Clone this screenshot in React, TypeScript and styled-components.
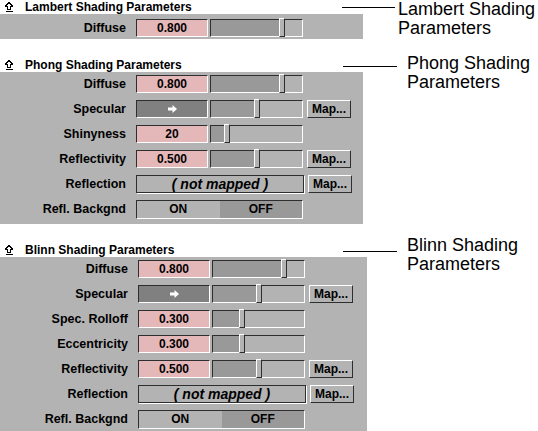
import React from "react";
import styled, { createGlobalStyle } from "styled-components";

const PANEL = "#b3b3b3";
const SHADE = "#999999";
const EDGE = "#2e2e2e";

type Param =
  | { kind: "value"; label: string; value: string; pos: number; map?: boolean }
  | { kind: "color"; label: string; pos: number; map?: boolean }
  | { kind: "texture"; label: string }
  | { kind: "toggle"; label: string; on: boolean };

type Section = {
  title: string;
  width: number;
  indent: number;
  pad: [number, number];
  note: { pull: number; top: number; lead: number; leader: number; gap: number };
  params: Param[];
};

const sections: Section[] = [
  {
    title: "Lambert Shading Parameters",
    width: 363,
    indent: 126,
    pad: [5, 2],
    note: { pull: 21, top: 0, lead: 7, leader: 53, gap: 3 },
    params: [{ kind: "value", label: "Diffuse", value: "0.800", pos: 0.8 }],
  },
  {
    title: "Phong Shading Parameters",
    width: 363,
    indent: 126,
    pad: [3, 6],
    note: { pull: 20, top: -4, lead: 8, leader: 54, gap: 10 },
    params: [
      { kind: "value", label: "Diffuse", value: "0.800", pos: 0.8 },
      { kind: "color", label: "Specular", pos: 0.5, map: true },
      { kind: "value", label: "Shinyness", value: "20", pos: 20 / 128 },
      { kind: "value", label: "Reflectivity", value: "0.500", pos: 0.5, map: true },
      { kind: "texture", label: "Reflection" },
      { kind: "toggle", label: "Refl. Backgnd", on: false },
    ],
  },
  {
    title: "Blinn Shading Parameters",
    width: 367,
    indent: 128,
    pad: [3, 4],
    note: { pull: 24, top: -7, lead: 8, leader: 54, gap: 10 },
    params: [
      { kind: "value", label: "Diffuse", value: "0.800", pos: 0.8 },
      { kind: "color", label: "Specular", pos: 0.5, map: true },
      { kind: "value", label: "Spec. Rolloff", value: "0.300", pos: 0.3 },
      { kind: "value", label: "Eccentricity", value: "0.300", pos: 0.3 },
      { kind: "value", label: "Reflectivity", value: "0.500", pos: 0.5, map: true },
      { kind: "texture", label: "Reflection" },
      { kind: "toggle", label: "Refl. Backgnd", on: false },
    ],
  },
];

// slider geometry: 93px track, 1px border, 6px thumb
const TRACK = 93;
const THUMB = 6;

const Slider = ({ pos }: { pos: number }) => {
  const travel = Math.round(pos * (TRACK - 2 - THUMB));
  return (
    <Track>
      <Fill style={{ width: travel }} />
      <Thumb style={{ left: travel }} />
    </Track>
  );
};

const Row = ({ p, indent }: { p: Param; indent: number }) => (
  <SRow>
    <Label $width={indent}>{p.label}</Label>
    {p.kind === "value" && (
      <>
        <Field $tone="#e4b8b8">{p.value}</Field>
        <Slider pos={p.pos} />
      </>
    )}
    {p.kind === "color" && (
      <>
        <Field $tone="#808080">
          <svg width="9" height="8" viewBox="0 0 9 8">
            <path d="M0 2.5H4.5V0L9 4L4.5 8V5.5H0Z" fill="#fff" />
          </svg>
        </Field>
        <Slider pos={p.pos} />
      </>
    )}
    {p.kind === "texture" && <Texture>( not mapped )</Texture>}
    {p.kind === "toggle" && (
      <Toggle>
        <ToggleHalf $pressed={p.on}>ON</ToggleHalf>
        <ToggleHalf $pressed={!p.on}>OFF</ToggleHalf>
      </Toggle>
    )}
    {(("map" in p && p.map) || p.kind === "texture") && <MapButton>Map...</MapButton>}
  </SRow>
);

const App = () => {
  return (
    <Page>
      <GlobalStyle />
      {sections.map(s => {
        const [first, ...rest] = s.title.split(" Parameters");
        return (
          <Block key={s.title}>
            <Sheet $width={s.width}>
              <Header>
                <svg width="8" height="10" viewBox="0 0 8 10" shapeRendering="crispEdges">
                  <path d="M4 0.5L0.5 4H2.5V7H5.5V4H7.5Z" fill="none" stroke="#000" />
                  <path d="M0.5 9.5H7.5" stroke="#000" />
                </svg>
                <HeaderTitle>{s.title}</HeaderTitle>
              </Header>
              <Panel $top={s.pad[0]} $bottom={s.pad[1]}>
                {s.params.map(p => (
                  <Row key={p.label} p={p} indent={s.indent} />
                ))}
              </Panel>
            </Sheet>
            <Note $pull={s.note.pull} $top={s.note.top}>
              <Leader $width={s.note.leader} $top={s.note.lead - s.note.top} />
              <Caption $gap={s.note.gap}>
                {first}
                <br />
                Parameters{rest.join("")}
              </Caption>
            </Note>
          </Block>
        );
      })}
    </Page>
  );
};

export default App;

const GlobalStyle = createGlobalStyle`
  html, body {
    margin: 0;
    padding: 0;
    background: #fff;
  }
  body {
    font-family: "Liberation Sans", Arial, sans-serif;
    color: #000;
    overflow: hidden;
  }
`;

const Page = styled.div`
  display: flex;
  flex-direction: column;
  gap: 19px;
  width: 538px;
`;

const Block = styled.section`
  display: flex;
  align-items: flex-start;
`;

const Sheet = styled.div<{ $width: number }>`
  width: ${p => p.$width}px;
  flex-shrink: 0;
  display: flex;
  flex-direction: column;
`;

const Header = styled.div`
  height: 14px;
  display: flex;
  align-items: center;
  padding-left: 5px;
`;

const HeaderTitle = styled.span`
  margin-left: 12px;
  font-size: 12px;
  line-height: 14px;
  font-weight: 700;
`;

const Panel = styled.div<{ $top: number; $bottom: number }>`
  background: ${PANEL};
  display: flex;
  flex-direction: column;
  gap: 7px;
  padding: ${p => p.$top}px 0 ${p => p.$bottom}px;
`;

const SRow = styled.div`
  display: flex;
  align-items: center;
  height: 18px;
`;

const Label = styled.span<{ $width: number }>`
  width: ${p => p.$width}px;
  margin-right: 10px;
  text-align: right;
  font-size: 12.5px;
  font-weight: 700;
  white-space: nowrap;
`;

const sunken = `
  box-sizing: border-box;
  border: 1px solid;
  border-color: ${EDGE} #fff #fff ${EDGE};
`;

const Field = styled.div<{ $tone: string }>`
  ${sunken}
  width: 72px;
  height: 18px;
  background: ${p => p.$tone};
  display: flex;
  align-items: center;
  justify-content: center;
  font-size: 12px;
  font-weight: 700;
`;

const Track = styled.div`
  ${sunken}
  position: relative;
  margin-left: 2px;
  width: ${TRACK}px;
  height: 18px;
  background: ${PANEL};
`;

const Fill = styled.div`
  height: 100%;
  background: ${SHADE};
`;

const Thumb = styled.div`
  position: absolute;
  top: -2px;
  bottom: -1px;
  width: ${THUMB}px;
  box-sizing: border-box;
  border: 1px solid;
  border-color: #fff ${EDGE} ${EDGE} #fff;
  background: ${PANEL};
`;

const MapButton = styled.button`
  margin-left: 4px;
  width: 44px;
  height: 18px;
  padding: 0;
  box-sizing: border-box;
  border: 1px solid;
  border-color: #fff ${EDGE} ${EDGE} #fff;
  background: ${PANEL};
  font-family: inherit;
  font-size: 12px;
  font-weight: 700;
  color: #000;
`;

const Texture = styled.div`
  box-sizing: border-box;
  width: 168px;
  height: 18px;
  border: 1px solid ${EDGE};
  box-shadow: 1px 1px 0 #fff;
  background: ${PANEL};
  display: flex;
  align-items: center;
  justify-content: center;
  font-size: 14px;
  font-weight: 700;
  font-style: italic;
`;

const Toggle = styled.div`
  ${sunken}
  width: 167px;
  height: 19px;
  display: flex;
`;

const ToggleHalf = styled.div<{ $pressed: boolean }>`
  flex: 1;
  display: flex;
  align-items: center;
  justify-content: center;
  background: ${p => (p.$pressed ? SHADE : PANEL)};
  font-size: 12px;
  font-weight: 700;
`;

const Note = styled.div<{ $pull: number; $top: number }>`
  display: flex;
  align-items: flex-start;
  margin-left: -${p => p.$pull}px;
  margin-top: ${p => p.$top}px;
`;

const Leader = styled.div<{ $width: number; $top: number }>`
  width: ${p => p.$width}px;
  height: 1px;
  margin-top: ${p => p.$top}px;
  background: #000;
  flex-shrink: 0;
`;

const Caption = styled.div<{ $gap: number }>`
  margin-left: ${p => p.$gap}px;
  font-size: 18px;
  line-height: 19px;
  white-space: nowrap;
`;
